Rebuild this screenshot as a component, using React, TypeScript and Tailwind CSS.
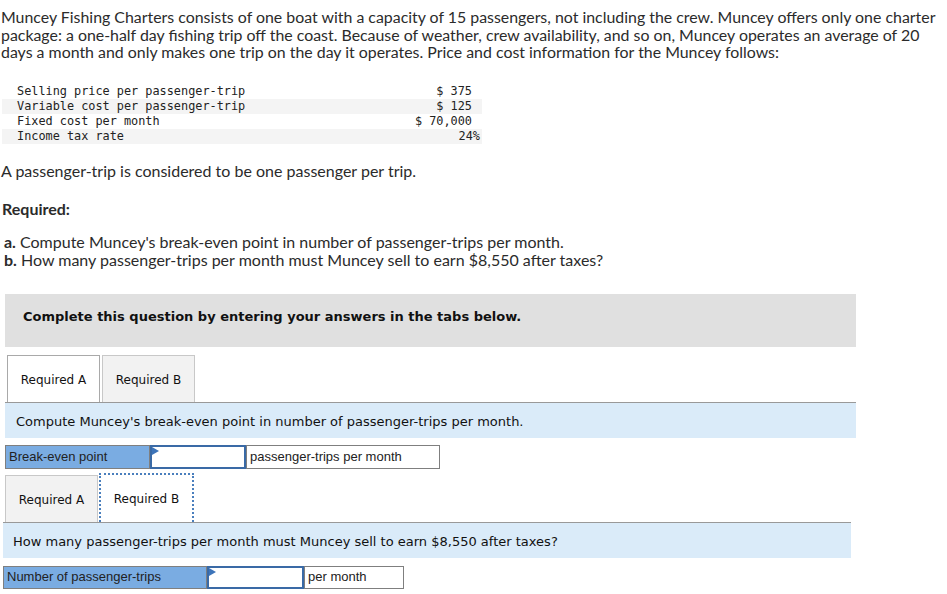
import React from 'react';

/* ------------------------------------------------------------------ */
/*  Muncey Fishing Charters — break-even question with two tabs      */
/* ------------------------------------------------------------------ */

const rows = [
  { label: 'Selling price per passenger-trip', value: '$ 375', pad: 'pr-[10px]' },
  { label: 'Variable cost per passenger-trip', value: '$ 125', pad: 'pr-[10px]' },
  { label: 'Fixed cost per month', value: '$ 70,000', pad: 'pr-[10px]' },
  { label: 'Income tax rate', value: '24%', pad: 'pr-[2px]' },
];

const Flag = () => (
  <span className="absolute left-0 top-0 w-0 h-0 border-t-[4px] border-b-[4px] border-l-[7px] border-t-transparent border-b-transparent border-l-[#3d74b9]" />
);

const App: React.FC = () => {
  return (
    <div className="w-[947px] h-[594px] bg-white overflow-hidden text-[#2b2b2b]">
      {/* Problem text */}
      <div className="font-['Lato',sans-serif] text-[15.9px] leading-[17.5px] pt-[8px] pl-[1px]">
        <p>
          Muncey Fishing Charters consists of one boat with a capacity of 15 passengers, not including the crew. Muncey offers only one charter
          <br />
          package: a one-half day fishing trip off the coast. Because of weather, crew availability, and so on, Muncey operates an average of 20
          <br />
          days a month and only makes one trip on the day it operates. Price and cost information for the Muncey follows:
        </p>
      </div>

      {/* Data table */}
      <div className="mt-[23px] ml-[2px] w-[480px] font-['DejaVu_Sans_Mono',monospace] text-[11.85px] text-[#222]">
        {rows.map((r, i) => (
          <div
            key={i}
            className={`flex justify-between h-[15px] leading-[15px] ${i % 2 === 1 ? 'bg-[#f4f4f4]' : ''}`}
          >
            <span className="pl-[15px]">{r.label}</span>
            <span className={r.pad}>{r.value}</span>
          </div>
        ))}
      </div>

      <div className="font-['Lato',sans-serif] text-[16px] leading-[18px]">
        <p className="mt-[18px] pl-[1px]">A passenger-trip is considered to be one passenger per trip.</p>
        <p className="mt-[20px] pl-[2px] font-bold">Required:</p>
        <p className="mt-[15px] pl-[4px]">
          <b>a.</b> Compute Muncey's break-even point in number of passenger-trips per month.
        </p>
        <p className="pl-[4px]">
          <b>b.</b> How many passenger-trips per month must Muncey sell to earn $8,550 after taxes?
        </p>
      </div>

      {/* Instruction banner */}
      <div className="mt-[25px] ml-[5px] w-[851px] h-[53px] bg-[#e0e0e0] pt-[15px] pl-[18px] font-['DejaVu_Sans',sans-serif] text-[13px] leading-[16px] font-bold text-[#111]">
        Complete this question by entering your answers in the tabs below.
      </div>

      {/* Tab set A */}
      <div className="mt-[8px] flex items-end pl-[7px] font-['DejaVu_Sans',sans-serif] text-[12px] text-[#111]">
        <div className="w-[93px] h-[47px] pt-[2px] border border-b-0 border-[#a9a9a9] bg-white flex items-center justify-center">
          Required A
        </div>
        <div className="ml-[2px] w-[93px] h-[47px] pt-[2px] border border-b-0 border-[#c8c8c8] bg-[#f2f2f2] flex items-center justify-center">
          Required B
        </div>
      </div>
      <div className="ml-[5px] w-[851px] h-[36px] pt-[3px] border-t border-[#999] bg-[#daebf9] flex items-center pl-[11px] font-['DejaVu_Sans',sans-serif] text-[13px] text-[#111]">
        Compute Muncey's break-even point in number of passenger-trips per month.
      </div>
      <div className="mt-[7px] ml-[5px] flex h-[24px] font-['Liberation_Sans',Arial,sans-serif] text-[13px] text-[#222]">
        <div className="w-[145px] border border-[#7f7f7f] bg-[#7aace2] flex items-center pl-[3px]">Break-even point</div>
        <div className="relative w-[96px] border-2 border-[#3a6aa6] bg-white">
          <Flag />
        </div>
        <div className="w-[194px] border border-[#7f7f7f] bg-white flex items-center pl-[3px]">passenger-trips per month</div>
      </div>

      {/* Tab set B */}
      <div className="mt-[4px] flex items-end pl-[5px] font-['DejaVu_Sans',sans-serif] text-[12px] text-[#111]">
        <div className="w-[93px] h-[47px] pt-[2px] border border-b-0 border-[#c8c8c8] bg-[#f2f2f2] flex items-center justify-center">
          Required A
        </div>
        <div className="ml-[1px] w-[95px] h-[49px] pt-[2px] border-2 border-dotted border-b-0 border-[#4a7fbd] bg-white flex items-center justify-center">
          Required B
        </div>
      </div>
      <div className="ml-[3px] w-[848px] h-[36px] pt-[3px] border-t border-[#999] bg-[#daebf9] flex items-center pl-[10px] font-['DejaVu_Sans',sans-serif] text-[13px] text-[#111]">
        How many passenger-trips per month must Muncey sell to earn $8,550 after taxes?
      </div>
      <div className="mt-[8px] ml-[3px] flex h-[23px] font-['Liberation_Sans',Arial,sans-serif] text-[13px] text-[#222]">
        <div className="w-[204px] border border-[#7f7f7f] bg-[#7aace2] flex items-center pl-[3px]">Number of passenger-trips</div>
        <div className="relative w-[97px] border-2 border-[#3a6aa6] bg-white">
          <Flag />
        </div>
        <div className="w-[100px] border border-[#7f7f7f] bg-white flex items-center pl-[3px]">per month</div>
      </div>
    </div>
  );
};

export default App;
